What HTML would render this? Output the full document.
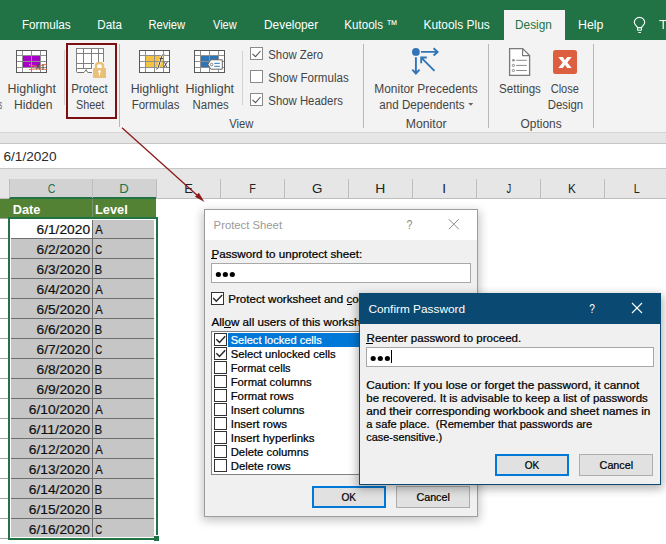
<!DOCTYPE html>
<html><head><meta charset="utf-8"><style>
html,body{margin:0;padding:0;background:#fff;overflow:hidden;}
svg{display:block;font-family:"Liberation Sans",sans-serif;}
text{white-space:pre;}
</style></head><body>
<svg width="666" height="544" viewBox="0 0 666 544">
<rect x="0" y="0" width="666" height="544" fill="#ffffff" />
<rect x="0" y="0" width="666" height="40" fill="#217346" />
<rect x="504" y="10" width="61" height="30" fill="#f3f3f3" />
<text x="21.96" y="29" font-size="12.5" fill="#fff" textLength="48.77" lengthAdjust="spacingAndGlyphs" >Formulas</text>
<text x="97.37" y="29" font-size="12.5" fill="#fff" textLength="24.59" lengthAdjust="spacingAndGlyphs" >Data</text>
<text x="148.40" y="29" font-size="12.5" fill="#fff" textLength="36.72" lengthAdjust="spacingAndGlyphs" >Review</text>
<text x="213.00" y="29" font-size="12.5" fill="#fff" textLength="23.64" lengthAdjust="spacingAndGlyphs" >View</text>
<text x="264.05" y="29" font-size="12.5" fill="#fff" textLength="54.10" lengthAdjust="spacingAndGlyphs" >Developer</text>
<text x="344.37" y="29" font-size="12.5" fill="#fff" textLength="53.42" lengthAdjust="spacingAndGlyphs" >Kutools ™</text>
<text x="423.45" y="29" font-size="12.5" fill="#fff" textLength="66.29" lengthAdjust="spacingAndGlyphs" >Kutools Plus</text>
<text x="515.05" y="29" font-size="12.5" fill="#217346" textLength="36.90" lengthAdjust="spacingAndGlyphs" >Design</text>
<text x="578.01" y="29" font-size="12.5" fill="#fff" textLength="25.44" lengthAdjust="spacingAndGlyphs" >Help</text>
<path d="M637.5,27.8 C637,26 634.3,24.8 634.3,22.6 A5.2,5.2 0 1 1 644.7,22.6 C644.7,24.8 642,26 641.5,27.8 Z" fill="none" stroke="#fff" stroke-width="1.1"/>
<rect x="637.6" y="27.6" width="3.8" height="2.6" fill="none" stroke="#fff" stroke-width="1"/>
<rect x="638.3" y="32" width="2.6" height="1" fill="#fff"/>
<rect x="659.3" y="20" width="8" height="1.1" fill="#fff"/><rect x="662.6" y="20" width="1.2" height="9" fill="#fff"/>
<rect x="0" y="40" width="666" height="92" fill="#f3f3f3" />
<rect x="64" y="50" width="1" height="55" fill="#d2d2d2"/>
<rect x="119" y="44" width="1" height="83" fill="#b8b8b8"/>
<rect x="242" y="51" width="1" height="54" fill="#d2d2d2"/>
<rect x="363" y="44" width="1" height="84" fill="#b8b8b8"/>
<rect x="488" y="44" width="1" height="84" fill="#b8b8b8"/>
<rect x="593" y="44" width="1" height="84" fill="#b8b8b8"/>
<text x="-0.50" y="108.7" font-size="12" fill="#444444" textLength="2.50" lengthAdjust="spacingAndGlyphs" >s</text>
<text x="7.60" y="92.7" font-size="12" fill="#444444" textLength="48.31" lengthAdjust="spacingAndGlyphs" >Highlight</text>
<text x="14.00" y="108.7" font-size="12" fill="#444444" textLength="38.38" lengthAdjust="spacingAndGlyphs" >Hidden</text>
<text x="71.20" y="92.7" font-size="12" fill="#444444" textLength="36.46" lengthAdjust="spacingAndGlyphs" >Protect</text>
<text x="76.00" y="108.7" font-size="12" fill="#444444" textLength="28.20" lengthAdjust="spacingAndGlyphs" >Sheet</text>
<text x="130.70" y="92.7" font-size="12" fill="#444444" textLength="48.11" lengthAdjust="spacingAndGlyphs" >Highlight</text>
<text x="131.70" y="108.7" font-size="12" fill="#444444" textLength="47.80" lengthAdjust="spacingAndGlyphs" >Formulas</text>
<text x="185.40" y="92.7" font-size="12" fill="#444444" textLength="48.71" lengthAdjust="spacingAndGlyphs" >Highlight</text>
<text x="192.60" y="108.7" font-size="12" fill="#444444" textLength="36.10" lengthAdjust="spacingAndGlyphs" >Names</text>
<text x="229.30" y="128.3" font-size="12" fill="#444444" textLength="24.09" lengthAdjust="spacingAndGlyphs" >View</text>
<rect x="250.5" y="47.5" width="12" height="12" fill="#fff" stroke="#8a8a8a" stroke-width="1"/>
<path d="M252.5,53.8 L255.5,56.7 L260.5,51" fill="none" stroke="#555" stroke-width="1.1"/>
<rect x="250.5" y="70.5" width="12" height="12" fill="#fff" stroke="#8a8a8a" stroke-width="1"/>
<rect x="250.5" y="93.5" width="12" height="12" fill="#fff" stroke="#8a8a8a" stroke-width="1"/>
<path d="M252.5,99.8 L255.5,102.7 L260.5,97" fill="none" stroke="#555" stroke-width="1.1"/>
<text x="268.30" y="59" font-size="12" fill="#444444" textLength="54.89" lengthAdjust="spacingAndGlyphs" >Show Zero</text>
<text x="268.30" y="81.6" font-size="12" fill="#444444" textLength="80.40" lengthAdjust="spacingAndGlyphs" >Show Formulas</text>
<text x="268.30" y="105" font-size="12" fill="#444444" textLength="74.60" lengthAdjust="spacingAndGlyphs" >Show Headers</text>
<text x="374.30" y="92.6" font-size="12" fill="#444444" textLength="103.40" lengthAdjust="spacingAndGlyphs" >Monitor Precedents</text>
<text x="379.30" y="108.7" font-size="12" fill="#444444" textLength="85.20" lengthAdjust="spacingAndGlyphs" >and Dependents</text>
<path d="M468.3,103 L473.3,103 L470.8,105.8 Z" fill="#666"/>
<text x="405.80" y="128.3" font-size="12" fill="#444444" textLength="40.80" lengthAdjust="spacingAndGlyphs" >Monitor</text>
<text x="499.10" y="92.7" font-size="12" fill="#444444" textLength="41.80" lengthAdjust="spacingAndGlyphs" >Settings</text>
<text x="550.70" y="92.7" font-size="12" fill="#444444" textLength="28.20" lengthAdjust="spacingAndGlyphs" >Close</text>
<text x="547.70" y="108.7" font-size="12" fill="#444444" textLength="35.44" lengthAdjust="spacingAndGlyphs" >Design</text>
<text x="520.60" y="128.3" font-size="12" fill="#444444" textLength="41.00" lengthAdjust="spacingAndGlyphs" >Options</text>
<rect x="16" y="50" width="31" height="23" fill="#fff"/>
<rect x="22" y="55" width="19" height="13" fill="#a800c8"/>
<rect x="22" y="50" width="1" height="23" fill="#8f8f8f"/>
<rect x="31" y="50" width="1" height="23" fill="#8f8f8f"/>
<rect x="40" y="50" width="1" height="23" fill="#8f8f8f"/>
<rect x="16" y="55" width="31" height="1" fill="#8f8f8f"/>
<rect x="16" y="61" width="31" height="1" fill="#8f8f8f"/>
<rect x="16" y="67" width="31" height="1" fill="#8f8f8f"/>
<rect x="16.5" y="50.5" width="30" height="22" fill="none" stroke="#585858" stroke-width="1"/>
<path d="M29,69.6 C33,69 37,68.6 41,69 C43,69.3 45,69.6 46.5,69.4" fill="none" stroke="#f0704f" stroke-width="1.1" opacity="0.9"/>
<path d="M30.5,65.2 C33,65.6 35,66.5 38,66.2 C41,65.6 43.5,64.5 46.5,64.4" fill="none" stroke="#f0704f" stroke-width="1.1" opacity="0.9"/>
<path d="M36.5,69.5 L38.3,64.5 L39.5,69.5 M43,64 V70" fill="none" stroke="#4a4a4a" stroke-width="1"/>
<rect x="29" y="64" width="1.2" height="1.2" fill="#f5a060"/>
<rect x="76" y="48" width="28" height="25" fill="#fff"/>
<rect x="76" y="48" width="1" height="23" fill="#7f7f7f"/>
<rect x="83" y="48" width="1" height="21" fill="#7f7f7f"/>
<rect x="91" y="48" width="1" height="21" fill="#7f7f7f"/>
<rect x="98" y="48" width="1" height="14" fill="#7f7f7f"/>
<rect x="103" y="48" width="1" height="14" fill="#7f7f7f"/>
<rect x="76" y="48" width="28" height="1" fill="#7f7f7f"/>
<rect x="76" y="53" width="28" height="1" fill="#7f7f7f"/>
<rect x="76" y="63" width="18" height="1" fill="#7f7f7f"/>
<rect x="76" y="68" width="16" height="1" fill="#7f7f7f"/>
<path d="M76.5,70.5 V71.5 Q76.5,72.5 77.5,72.5 H84 L86.3,69.6 Q86.8,72.5 88.2,72.5 H92" fill="none" stroke="#6f6f6f" stroke-width="1"/>
<path d="M96,68.5 V65.6 C96,63.5 97.4,63 99.5,63 C101.6,63 103,63.5 103,65.6 V68.5" fill="none" stroke="#e8c07a" stroke-width="2.5"/>
<rect x="93" y="68" width="13" height="10" rx="0.8" fill="#e8c07a"/>
<circle cx="99.5" cy="71.6" r="1.3" fill="#fff"/><rect x="99" y="72" width="1" height="3.6" fill="#fff"/>
<rect x="139" y="50" width="31" height="23" fill="#fff"/>
<rect x="145" y="55" width="18" height="13" fill="#f5c342"/>
<rect x="145" y="50" width="1" height="23" fill="#8f8f8f"/>
<rect x="154" y="50" width="1" height="23" fill="#8f8f8f"/>
<rect x="163" y="50" width="1" height="23" fill="#8f8f8f"/>
<rect x="139" y="55" width="31" height="1" fill="#8f8f8f"/>
<rect x="139" y="61" width="31" height="1" fill="#8f8f8f"/>
<rect x="139" y="67" width="31" height="1" fill="#8f8f8f"/>
<rect x="139.5" y="50.5" width="30" height="22" fill="none" stroke="#585858" stroke-width="1"/>
<path d="M156.3,69 C157.3,69.3 158,68.3 158.4,67 L161.6,56.5 C162,55 163,54.6 164.6,55 M159.6,58.6 H163.2" fill="none" stroke="#fff" stroke-width="2.4" opacity="0.85"/>
<path d="M156.3,69 C157.3,69.3 158,68.3 158.4,67 L161.6,56.5 C162,55 163,54.6 164.6,55 M159.6,58.6 H163.2" fill="none" stroke="#3c3c3c" stroke-width="1"/>
<path d="M163.8,61.7 C165.2,62 165.5,66 166.8,67.2 M167.5,61.8 L163.8,67.2" fill="none" stroke="#3c3c3c" stroke-width="0.9"/>
<rect x="194" y="50" width="31" height="23" fill="#fff"/>
<rect x="200" y="55" width="19" height="13" fill="#2e75b6"/>
<rect x="200" y="50" width="1" height="23" fill="#8f8f8f"/>
<rect x="209" y="50" width="1" height="23" fill="#8f8f8f"/>
<rect x="218" y="50" width="1" height="23" fill="#8f8f8f"/>
<rect x="194" y="55" width="31" height="1" fill="#8f8f8f"/>
<rect x="194" y="61" width="31" height="1" fill="#8f8f8f"/>
<rect x="194" y="67" width="31" height="1" fill="#8f8f8f"/>
<rect x="194.5" y="50.5" width="30" height="22" fill="none" stroke="#585858" stroke-width="1"/>
<path d="M207.9,64.3 L210.8,59.8 H222.3 V69.2 H210.8 Z" fill="#fff" stroke="#666" stroke-width="1"/>
<circle cx="211.6" cy="64.5" r="1.3" fill="none" stroke="#666" stroke-width="0.8"/>
<rect x="214.2" y="62.8" width="5.6" height="1" fill="#2e75b6"/><rect x="214.2" y="65.8" width="5.6" height="1" fill="#2e75b6"/>
<rect x="67" y="44" width="49" height="74" fill="none" stroke="#7a1010" stroke-width="2"/>
<circle cx="415.9" cy="51.9" r="3.9" fill="#3174b8"/>
<path d="M421,51.9 H438 M433.6,48.3 L437.6,51.9 L433.6,55.5 M415.9,57.2 V74 M412.3,69.6 L415.9,73.6 L419.5,69.6 M434.5,70.8 L421.5,57.8 M421.2,63.2 V57.5 H426.8" fill="none" stroke="#3174b8" stroke-width="1.9"/>
<path d="M509.6,48.6 H522.6 L529.6,55.6 V75.4 H509.6 Z" fill="#fff" stroke="#7a7a7a" stroke-width="1.3"/>
<path d="M522.6,48.6 V55.6 H529.6" fill="none" stroke="#7a7a7a" stroke-width="1.2"/>
<circle cx="513.4" cy="60.3" r="1.3" fill="#8a8a8a"/>
<circle cx="513.4" cy="65.4" r="1.1" fill="none" stroke="#7a7a7a" stroke-width="0.9"/><circle cx="513.4" cy="70.5" r="1.1" fill="none" stroke="#7a7a7a" stroke-width="0.9"/>
<rect x="516.2" y="59.8" width="10.6" height="1" fill="#8a8a8a"/>
<rect x="516.2" y="64.9" width="10.6" height="1" fill="#8a8a8a"/>
<rect x="516.2" y="70.0" width="10.6" height="1" fill="#8a8a8a"/>
<rect x="553" y="50" width="24" height="24" rx="2.5" fill="#dc6040"/>
<path d="M558.3,57.1 H562.8 L565,60.2 L567.2,57.1 H571.7 L567.3,62.5 L571.7,68 H567.2 L565,64.8 L562.8,68 H558.3 L562.7,62.5 Z" fill="#fff"/>
<rect x="0" y="132" width="666" height="1" fill="#d5d5d5"/>
<rect x="0" y="133" width="666" height="10" fill="#e6e6e6" />
<rect x="0" y="143" width="666" height="1" fill="#c6c6c6"/>
<rect x="0" y="144" width="666" height="24" fill="#ffffff" />
<rect x="0" y="168" width="666" height="1" fill="#c6c6c6"/>
<rect x="0" y="169" width="666" height="29" fill="#e6e6e6" />
<text x="3.50" y="161.2" font-size="13.5" fill="#2a2a2a" textLength="53.01" lengthAdjust="spacingAndGlyphs" >6/1/2020</text>
<rect x="9" y="179" width="147" height="19" fill="#d2d2d2" />
<rect x="0" y="198" width="9" height="1" fill="#bdbdbd"/>
<rect x="156" y="198" width="510" height="1" fill="#bdbdbd"/>
<rect x="9" y="197" width="147" height="2" fill="#217346" />
<rect x="9" y="179" width="1" height="19" fill="#bdbdbd"/>
<rect x="92" y="179" width="1" height="19" fill="#bdbdbd"/>
<rect x="156" y="179" width="1" height="19" fill="#bdbdbd"/>
<rect x="220" y="179" width="1" height="19" fill="#bdbdbd"/>
<rect x="284" y="179" width="1" height="19" fill="#bdbdbd"/>
<rect x="348" y="179" width="1" height="19" fill="#bdbdbd"/>
<rect x="412" y="179" width="1" height="19" fill="#bdbdbd"/>
<rect x="476" y="179" width="1" height="19" fill="#bdbdbd"/>
<rect x="540" y="179" width="1" height="19" fill="#bdbdbd"/>
<rect x="604" y="179" width="1" height="19" fill="#bdbdbd"/>
<text x="47.70" y="192.7" font-size="12.5" fill="#217346" textLength="7.62" lengthAdjust="spacingAndGlyphs" >C</text>
<text x="119.35" y="192.7" font-size="12.5" fill="#217346" textLength="9.48" lengthAdjust="spacingAndGlyphs" >D</text>
<text x="184.27" y="192.7" font-size="12.5" fill="#222" textLength="8.58" lengthAdjust="spacingAndGlyphs" >E</text>
<text x="249.23" y="192.7" font-size="12.5" fill="#222" textLength="6.65" lengthAdjust="spacingAndGlyphs" >F</text>
<text x="312.00" y="192.7" font-size="12.5" fill="#222" textLength="10.37" lengthAdjust="spacingAndGlyphs" >G</text>
<text x="375.29" y="192.7" font-size="12.5" fill="#222" textLength="10.04" lengthAdjust="spacingAndGlyphs" >H</text>
<text x="442.30" y="192.7" font-size="12.5" fill="#222" textLength="3.82" lengthAdjust="spacingAndGlyphs" >I</text>
<text x="506.50" y="192.7" font-size="12.5" fill="#222" textLength="4.69" lengthAdjust="spacingAndGlyphs" >J</text>
<text x="568.06" y="192.7" font-size="12.5" fill="#222" textLength="7.82" lengthAdjust="spacingAndGlyphs" >K</text>
<text x="633.63" y="192.7" font-size="12.5" fill="#222" textLength="6.02" lengthAdjust="spacingAndGlyphs" >L</text>
<rect x="0" y="199" width="156" height="19" fill="#548235" />
<rect x="92" y="199" width="1" height="18" fill="#7d8f72"/>
<text x="12.80" y="213.7" font-size="12.5" fill="#fff" font-weight="bold" textLength="27.65" lengthAdjust="spacingAndGlyphs" >Date</text>
<text x="95.00" y="213.6" font-size="12.5" fill="#fff" font-weight="bold" textLength="32.79" lengthAdjust="spacingAndGlyphs" >Level</text>
<rect x="0" y="218" width="8" height="1" fill="#a3a3a3"/>
<rect x="0" y="238" width="8" height="1" fill="#a3a3a3"/>
<rect x="0" y="258" width="8" height="1" fill="#a3a3a3"/>
<rect x="0" y="278" width="8" height="1" fill="#a3a3a3"/>
<rect x="0" y="298" width="8" height="1" fill="#a3a3a3"/>
<rect x="0" y="318" width="8" height="1" fill="#a3a3a3"/>
<rect x="0" y="338" width="8" height="1" fill="#a3a3a3"/>
<rect x="0" y="358" width="8" height="1" fill="#a3a3a3"/>
<rect x="0" y="378" width="8" height="1" fill="#a3a3a3"/>
<rect x="0" y="398" width="8" height="1" fill="#a3a3a3"/>
<rect x="0" y="418" width="8" height="1" fill="#a3a3a3"/>
<rect x="0" y="438" width="8" height="1" fill="#a3a3a3"/>
<rect x="0" y="458" width="8" height="1" fill="#a3a3a3"/>
<rect x="0" y="478" width="8" height="1" fill="#a3a3a3"/>
<rect x="0" y="498" width="8" height="1" fill="#a3a3a3"/>
<rect x="0" y="518" width="8" height="1" fill="#a3a3a3"/>
<rect x="0" y="538" width="8" height="1" fill="#a3a3a3"/>
<rect x="11" y="220" width="143" height="317" fill="#c6c6c6" />
<rect x="11" y="220" width="81" height="18" fill="#ffffff" />
<rect x="11" y="238" width="143" height="1" fill="#6e6e6e"/>
<rect x="11" y="258" width="143" height="1" fill="#6e6e6e"/>
<rect x="11" y="278" width="143" height="1" fill="#6e6e6e"/>
<rect x="11" y="298" width="143" height="1" fill="#6e6e6e"/>
<rect x="11" y="318" width="143" height="1" fill="#6e6e6e"/>
<rect x="11" y="338" width="143" height="1" fill="#6e6e6e"/>
<rect x="11" y="358" width="143" height="1" fill="#6e6e6e"/>
<rect x="11" y="378" width="143" height="1" fill="#6e6e6e"/>
<rect x="11" y="398" width="143" height="1" fill="#6e6e6e"/>
<rect x="11" y="418" width="143" height="1" fill="#6e6e6e"/>
<rect x="11" y="438" width="143" height="1" fill="#6e6e6e"/>
<rect x="11" y="458" width="143" height="1" fill="#6e6e6e"/>
<rect x="11" y="478" width="143" height="1" fill="#6e6e6e"/>
<rect x="11" y="498" width="143" height="1" fill="#6e6e6e"/>
<rect x="11" y="518" width="143" height="1" fill="#6e6e6e"/>
<rect x="92" y="220" width="1" height="317" fill="#6e6e6e"/>
<rect x="8" y="217" width="150" height="2" fill="#217346" />
<rect x="8" y="217" width="2" height="323" fill="#217346" />
<rect x="8" y="538" width="146" height="2" fill="#217346" />
<rect x="156" y="217" width="2" height="318" fill="#217346" />
<rect x="154" y="536" width="5" height="5" fill="#217346" />
<text x="36.50" y="233.6" font-size="13" fill="#111" textLength="53.54" lengthAdjust="spacingAndGlyphs" stroke="#111" stroke-width="0.2">6/1/2020</text>
<text x="95.30" y="233.6" font-size="13" fill="#111" textLength="7.51" lengthAdjust="spacingAndGlyphs" stroke="#111" stroke-width="0.2">A</text>
<text x="36.50" y="253.6" font-size="13" fill="#111" textLength="53.54" lengthAdjust="spacingAndGlyphs" stroke="#111" stroke-width="0.2">6/2/2020</text>
<text x="95.30" y="253.6" font-size="13" fill="#111" textLength="6.88" lengthAdjust="spacingAndGlyphs" stroke="#111" stroke-width="0.2">C</text>
<text x="36.50" y="273.6" font-size="13" fill="#111" textLength="53.54" lengthAdjust="spacingAndGlyphs" stroke="#111" stroke-width="0.2">6/3/2020</text>
<text x="94.41" y="273.6" font-size="13" fill="#111" textLength="7.68" lengthAdjust="spacingAndGlyphs" stroke="#111" stroke-width="0.2">B</text>
<text x="36.50" y="293.6" font-size="13" fill="#111" textLength="53.54" lengthAdjust="spacingAndGlyphs" stroke="#111" stroke-width="0.2">6/4/2020</text>
<text x="95.30" y="293.6" font-size="13" fill="#111" textLength="7.51" lengthAdjust="spacingAndGlyphs" stroke="#111" stroke-width="0.2">A</text>
<text x="36.50" y="313.6" font-size="13" fill="#111" textLength="53.54" lengthAdjust="spacingAndGlyphs" stroke="#111" stroke-width="0.2">6/5/2020</text>
<text x="95.30" y="313.6" font-size="13" fill="#111" textLength="7.51" lengthAdjust="spacingAndGlyphs" stroke="#111" stroke-width="0.2">A</text>
<text x="36.50" y="333.6" font-size="13" fill="#111" textLength="53.54" lengthAdjust="spacingAndGlyphs" stroke="#111" stroke-width="0.2">6/6/2020</text>
<text x="94.41" y="333.6" font-size="13" fill="#111" textLength="7.68" lengthAdjust="spacingAndGlyphs" stroke="#111" stroke-width="0.2">B</text>
<text x="36.50" y="353.6" font-size="13" fill="#111" textLength="53.54" lengthAdjust="spacingAndGlyphs" stroke="#111" stroke-width="0.2">6/7/2020</text>
<text x="95.30" y="353.6" font-size="13" fill="#111" textLength="6.88" lengthAdjust="spacingAndGlyphs" stroke="#111" stroke-width="0.2">C</text>
<text x="36.50" y="373.6" font-size="13" fill="#111" textLength="53.54" lengthAdjust="spacingAndGlyphs" stroke="#111" stroke-width="0.2">6/8/2020</text>
<text x="94.41" y="373.6" font-size="13" fill="#111" textLength="7.68" lengthAdjust="spacingAndGlyphs" stroke="#111" stroke-width="0.2">B</text>
<text x="36.50" y="393.6" font-size="13" fill="#111" textLength="53.54" lengthAdjust="spacingAndGlyphs" stroke="#111" stroke-width="0.2">6/9/2020</text>
<text x="94.41" y="393.6" font-size="13" fill="#111" textLength="7.68" lengthAdjust="spacingAndGlyphs" stroke="#111" stroke-width="0.2">B</text>
<text x="28.80" y="413.6" font-size="13" fill="#111" textLength="61.24" lengthAdjust="spacingAndGlyphs" stroke="#111" stroke-width="0.2">6/10/2020</text>
<text x="95.30" y="413.6" font-size="13" fill="#111" textLength="7.51" lengthAdjust="spacingAndGlyphs" stroke="#111" stroke-width="0.2">A</text>
<text x="28.80" y="433.6" font-size="13" fill="#111" textLength="61.25" lengthAdjust="spacingAndGlyphs" stroke="#111" stroke-width="0.2">6/11/2020</text>
<text x="94.41" y="433.6" font-size="13" fill="#111" textLength="7.68" lengthAdjust="spacingAndGlyphs" stroke="#111" stroke-width="0.2">B</text>
<text x="28.80" y="453.6" font-size="13" fill="#111" textLength="61.24" lengthAdjust="spacingAndGlyphs" stroke="#111" stroke-width="0.2">6/12/2020</text>
<text x="95.30" y="453.6" font-size="13" fill="#111" textLength="7.51" lengthAdjust="spacingAndGlyphs" stroke="#111" stroke-width="0.2">A</text>
<text x="28.80" y="473.6" font-size="13" fill="#111" textLength="61.24" lengthAdjust="spacingAndGlyphs" stroke="#111" stroke-width="0.2">6/13/2020</text>
<text x="95.30" y="473.6" font-size="13" fill="#111" textLength="7.51" lengthAdjust="spacingAndGlyphs" stroke="#111" stroke-width="0.2">A</text>
<text x="28.80" y="493.6" font-size="13" fill="#111" textLength="61.24" lengthAdjust="spacingAndGlyphs" stroke="#111" stroke-width="0.2">6/14/2020</text>
<text x="94.41" y="493.6" font-size="13" fill="#111" textLength="7.68" lengthAdjust="spacingAndGlyphs" stroke="#111" stroke-width="0.2">B</text>
<text x="28.80" y="513.6" font-size="13" fill="#111" textLength="61.24" lengthAdjust="spacingAndGlyphs" stroke="#111" stroke-width="0.2">6/15/2020</text>
<text x="94.41" y="513.6" font-size="13" fill="#111" textLength="7.68" lengthAdjust="spacingAndGlyphs" stroke="#111" stroke-width="0.2">B</text>
<text x="28.80" y="533.6" font-size="13" fill="#111" textLength="61.24" lengthAdjust="spacingAndGlyphs" stroke="#111" stroke-width="0.2">6/16/2020</text>
<text x="95.30" y="533.6" font-size="13" fill="#111" textLength="6.88" lengthAdjust="spacingAndGlyphs" stroke="#111" stroke-width="0.2">C</text>
<path d="M122,127.8 L200.5,198.3" stroke="#8b1b1b" stroke-width="1.3" fill="none"/>
<path d="M204.5,202 L195,196.8 L198.8,192.8 Z" fill="#8b1b1b"/>
<defs><filter id="sh" x="-20%" y="-20%" width="140%" height="140%"><feGaussianBlur stdDeviation="5"/></filter></defs>
<rect x="202" y="211" width="278" height="310" fill="#000" opacity="0.22" filter="url(#sh)"/>
<rect x="204" y="209" width="274" height="308" fill="#9c9c9c" />
<rect x="205" y="210" width="272" height="30" fill="#ffffff" />
<rect x="205" y="240" width="272" height="276" fill="#f0f0f0" />
<text x="213.60" y="228.5" font-size="11.6" fill="#9a9a9a" textLength="68.44" lengthAdjust="spacingAndGlyphs" >Protect Sheet</text>
<text x="406.40" y="229" font-size="13.5" fill="#8a8a8a" textLength="5.90" lengthAdjust="spacingAndGlyphs" >?</text>
<path d="M448.8,219.2 L458.8,229.2 M458.8,219.2 L448.8,229.2" stroke="#8a8a8a" stroke-width="1" fill="none"/>
<text x="211.50" y="257.7" font-size="10.6" fill="#000" textLength="150.74" lengthAdjust="spacingAndGlyphs" stroke="#000" stroke-width="0.22">Password to unprotect sheet:</text>
<rect x="211" y="258" width="6" height="1" fill="#000"/>
<rect x="211.5" y="263.5" width="259" height="19" fill="#fff" stroke="#a8a8a8" stroke-width="1"/>
<ellipse cx="218.4" cy="274.5" rx="2.6" ry="2.5" fill="#000"/>
<ellipse cx="225.35" cy="274.5" rx="2.6" ry="2.5" fill="#000"/>
<ellipse cx="232.3" cy="274.5" rx="2.6" ry="2.5" fill="#000"/>
<rect x="211.5" y="292.5" width="12" height="12" fill="#fff" stroke="#333" stroke-width="1"/>
<path d="M213.2,298 L216.3,301.2 L222.2,295" fill="none" stroke="#2a2a2a" stroke-width="1.5"/>
<text x="228.30" y="303" font-size="10.6" fill="#000" textLength="237.48" lengthAdjust="spacingAndGlyphs" stroke="#000" stroke-width="0.22">Protect worksheet and contents of locked cells</text>
<text x="211.50" y="325.8" font-size="10.6" fill="#000" textLength="181.35" lengthAdjust="spacingAndGlyphs" stroke="#000" stroke-width="0.22">Allow all users of this worksheet to:</text>
<rect x="224" y="327" width="7" height="1" fill="#000"/>
<rect x="347" y="304" width="5" height="1" fill="#000"/>
<rect x="211.5" y="331.5" width="258" height="143" fill="#fff" stroke="#828282" stroke-width="1"/>
<rect x="228" y="333" width="240" height="14" fill="#0078d7" />
<rect x="214.5" y="333.5" width="12" height="12" fill="#fff" stroke="#333" stroke-width="1"/>
<path d="M216.3,339.2 L219.5,342.4 L225.2,336.2" fill="none" stroke="#2a2a2a" stroke-width="1.5"/>
<text x="230.70" y="343.8" font-size="10.6" fill="#fff" textLength="91.11" lengthAdjust="spacingAndGlyphs" stroke="#fff" stroke-width="0.22">Select locked cells</text>
<rect x="214.5" y="347.5" width="12" height="12" fill="#fff" stroke="#333" stroke-width="1"/>
<path d="M216.3,353.2 L219.5,356.4 L225.2,350.2" fill="none" stroke="#2a2a2a" stroke-width="1.5"/>
<text x="230.70" y="357.8" font-size="10.6" fill="#000" textLength="105.02" lengthAdjust="spacingAndGlyphs" stroke="#000" stroke-width="0.22">Select unlocked cells</text>
<rect x="214.5" y="361.5" width="12" height="12" fill="#fff" stroke="#333" stroke-width="1"/>
<text x="230.70" y="371.8" font-size="10.6" fill="#000" textLength="59.91" lengthAdjust="spacingAndGlyphs" stroke="#000" stroke-width="0.22">Format cells</text>
<rect x="214.5" y="375.5" width="12" height="12" fill="#fff" stroke="#333" stroke-width="1"/>
<text x="230.70" y="385.8" font-size="10.6" fill="#000" textLength="81.02" lengthAdjust="spacingAndGlyphs" stroke="#000" stroke-width="0.22">Format columns</text>
<rect x="214.5" y="389.5" width="12" height="12" fill="#fff" stroke="#333" stroke-width="1"/>
<text x="230.70" y="399.8" font-size="10.6" fill="#000" textLength="63.02" lengthAdjust="spacingAndGlyphs" stroke="#000" stroke-width="0.22">Format rows</text>
<rect x="214.5" y="403.5" width="12" height="12" fill="#fff" stroke="#333" stroke-width="1"/>
<text x="230.70" y="413.8" font-size="10.6" fill="#000" textLength="73.82" lengthAdjust="spacingAndGlyphs" stroke="#000" stroke-width="0.22">Insert columns</text>
<rect x="214.5" y="417.5" width="12" height="12" fill="#fff" stroke="#333" stroke-width="1"/>
<text x="230.70" y="427.8" font-size="10.6" fill="#000" textLength="56.32" lengthAdjust="spacingAndGlyphs" stroke="#000" stroke-width="0.22">Insert rows</text>
<rect x="214.5" y="431.5" width="12" height="12" fill="#fff" stroke="#333" stroke-width="1"/>
<text x="230.70" y="441.8" font-size="10.6" fill="#000" textLength="83.92" lengthAdjust="spacingAndGlyphs" stroke="#000" stroke-width="0.22">Insert hyperlinks</text>
<rect x="214.5" y="445.5" width="12" height="12" fill="#fff" stroke="#333" stroke-width="1"/>
<text x="230.70" y="455.8" font-size="10.6" fill="#000" textLength="77.92" lengthAdjust="spacingAndGlyphs" stroke="#000" stroke-width="0.22">Delete columns</text>
<rect x="214.5" y="459.5" width="12" height="12" fill="#fff" stroke="#333" stroke-width="1"/>
<text x="230.70" y="469.8" font-size="10.6" fill="#000" textLength="59.92" lengthAdjust="spacingAndGlyphs" stroke="#000" stroke-width="0.22">Delete rows</text>
<rect x="313" y="487" width="72" height="20" fill="#e1e1e1" stroke="#0078d7" stroke-width="2"/>
<text x="341.50" y="501" font-size="10.6" fill="#000" textLength="14.56" lengthAdjust="spacingAndGlyphs" stroke="#000" stroke-width="0.22">OK</text>
<rect x="396.5" y="486.5" width="73" height="21" fill="#e1e1e1" stroke="#adadad" stroke-width="1"/>
<text x="416.40" y="501" font-size="10.6" fill="#000" textLength="33.46" lengthAdjust="spacingAndGlyphs" stroke="#000" stroke-width="0.22">Cancel</text>
<rect x="357" y="295" width="306" height="194" fill="#000" opacity="0.3" filter="url(#sh)"/>
<rect x="359" y="293" width="302" height="192" fill="#0a4a72" />
<rect x="360" y="324" width="300" height="160" fill="#f0f0f0" />
<text x="368.40" y="312.8" font-size="11.6" fill="#fff" textLength="96.66" lengthAdjust="spacingAndGlyphs" >Confirm Password</text>
<text x="589.20" y="313" font-size="13.5" fill="#fff" textLength="5.68" lengthAdjust="spacingAndGlyphs" >?</text>
<path d="M632,303 L642,313 M642,303 L632,313" stroke="#fff" stroke-width="1.1" fill="none"/>
<text x="366.60" y="341.7" font-size="10.6" fill="#000" textLength="154.63" lengthAdjust="spacingAndGlyphs" stroke="#000" stroke-width="0.22">Reenter password to proceed.</text>
<rect x="366" y="343" width="7" height="1" fill="#000"/>
<rect x="366.5" y="347.5" width="287" height="19" fill="#fff" stroke="#a8a8a8" stroke-width="1"/>
<ellipse cx="373.2" cy="358.5" rx="2.6" ry="2.5" fill="#000"/>
<ellipse cx="380.3" cy="358.5" rx="2.6" ry="2.5" fill="#000"/>
<ellipse cx="387.4" cy="358.5" rx="2.6" ry="2.5" fill="#000"/>
<rect x="391" y="350" width="1" height="13" fill="#000"/>
<text x="366.30" y="388.7" font-size="10.6" fill="#000" textLength="272.94" lengthAdjust="spacingAndGlyphs" stroke="#000" stroke-width="0.22">Caution: If you lose or forget the password, it cannot</text>
<text x="366.30" y="401.65" font-size="10.6" fill="#000" textLength="281.52" lengthAdjust="spacingAndGlyphs" stroke="#000" stroke-width="0.22">be recovered. It is advisable to keep a list of passwords</text>
<text x="366.30" y="414.59999999999997" font-size="10.6" fill="#000" textLength="284.08" lengthAdjust="spacingAndGlyphs" stroke="#000" stroke-width="0.22">and their corresponding workbook and sheet names in</text>
<text x="366.30" y="427.54999999999995" font-size="10.6" fill="#000" textLength="225.99" lengthAdjust="spacingAndGlyphs" stroke="#000" stroke-width="0.22">a safe place.  (Remember that passwords are</text>
<text x="366.30" y="440.5" font-size="10.6" fill="#000" textLength="75.74" lengthAdjust="spacingAndGlyphs" stroke="#000" stroke-width="0.22">case-sensitive.)</text>
<rect x="496" y="455" width="72" height="20" fill="#e1e1e1" stroke="#0078d7" stroke-width="2"/>
<text x="524.70" y="468.8" font-size="10.6" fill="#000" textLength="14.56" lengthAdjust="spacingAndGlyphs" stroke="#000" stroke-width="0.22">OK</text>
<rect x="579.5" y="454.5" width="73" height="21" fill="#e1e1e1" stroke="#adadad" stroke-width="1"/>
<text x="599.60" y="468.8" font-size="10.6" fill="#000" textLength="33.56" lengthAdjust="spacingAndGlyphs" stroke="#000" stroke-width="0.22">Cancel</text>
</svg>
</body></html>
